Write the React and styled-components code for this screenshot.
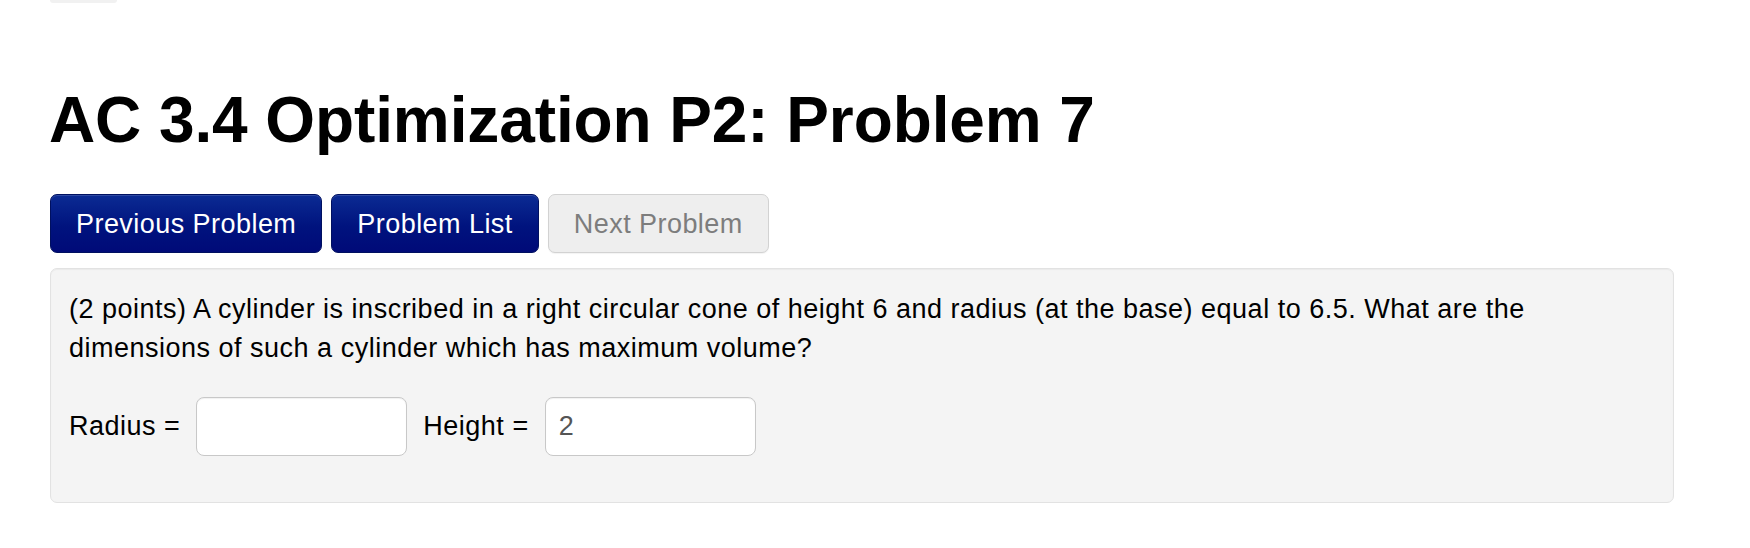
import styled, { createGlobalStyle, css } from "styled-components";

const GlobalStyle = createGlobalStyle`
  html, body {
    margin: 0;
    padding: 0;
    background: #ffffff;
  }
  body {
    font-family: "Liberation Sans", Arial, Helvetica, sans-serif;
    color: #000;
  }
`;

const Page = styled.div`
  width: 1750px;
  height: 548px;
  box-sizing: border-box;
  padding: 0 76px 0 50px;
  overflow: hidden;
`;

const TopStub = styled.div`
  width: 67px;
  height: 3px;
  background: #f1f1f1;
  border-radius: 0 0 6px 6px;
`;

const Heading = styled.h1`
  margin: 85px 0 0 -1px;
  font-size: 64px;
  line-height: 64px;
  font-weight: 700;
  letter-spacing: -0.1px;
`;

const NavBar = styled.div`
  display: flex;
  gap: 9px;
  margin-top: 42px;
`;

const NavButton = styled.button`
  box-sizing: border-box;
  height: 59px;
  padding: 1px 25px 0;
  font-family: inherit;
  font-size: 27px;
  line-height: 56px;
  letter-spacing: 0.45px;
  border-radius: 7px;
  cursor: pointer;
  ${({ $disabled }) =>
    $disabled
      ? css`
          background: #eeeeee;
          border: 1px solid #d2d2d2;
          color: #7d7d7d;
          box-shadow: 0 1px 1px rgba(0, 0, 0, 0.05);
        `
      : css`
          background: linear-gradient(#0b2b93, #00137e 55%, #000a78);
          border: 1px solid #001060;
          color: #ffffff;
          box-shadow: inset 0 1px 0 rgba(255, 255, 255, 0.15);
        `}
`;

const Well = styled.div`
  box-sizing: border-box;
  width: 1624px;
  height: 235px;
  margin-top: 15px;
  padding: 21px 18px 0;
  background: #f4f4f4;
  border: 1px solid #e2e2e2;
  border-radius: 7px;
  box-shadow: inset 0 1px 1px rgba(0, 0, 0, 0.04);
`;

const Question = styled.p`
  margin: 0;
  max-width: 1540px;
  font-size: 27px;
  line-height: 39px;
  letter-spacing: 0.5px;
`;

const AnswerRow = styled.div`
  display: flex;
  align-items: center;
  gap: 16px;
  margin-top: 29px;
`;

const Label = styled.span`
  font-size: 27px;
  line-height: 39px;
  letter-spacing: 0.5px;
`;

const AnswerInput = styled.input`
  box-sizing: border-box;
  width: 211px;
  height: 59px;
  padding: 0 13px;
  font-family: inherit;
  font-size: 27px;
  color: #555555;
  background: #ffffff;
  border: 1px solid #c8c8c8;
  border-radius: 8px;
  box-shadow: inset 0 1px 1px rgba(0, 0, 0, 0.06);
  outline: none;
`;

export default function App() {
  return (
    <>
      <GlobalStyle />
      <Page>
        <TopStub />
        <Heading>AC 3.4 Optimization P2: Problem 7</Heading>
        <NavBar>
          <NavButton>Previous Problem</NavButton>
          <NavButton>Problem List</NavButton>
          <NavButton $disabled>Next Problem</NavButton>
        </NavBar>
        <Well>
          <Question>
            (2 points) A cylinder is inscribed in a right circular cone of
            height 6 and radius (at the base) equal to 6.5. What are the
            dimensions of such a cylinder which has maximum volume?
          </Question>
          <AnswerRow>
            <Label>Radius =</Label>
            <AnswerInput defaultValue="" />
            <Label>Height =</Label>
            <AnswerInput defaultValue="2" />
          </AnswerRow>
        </Well>
      </Page>
    </>
  );
}
